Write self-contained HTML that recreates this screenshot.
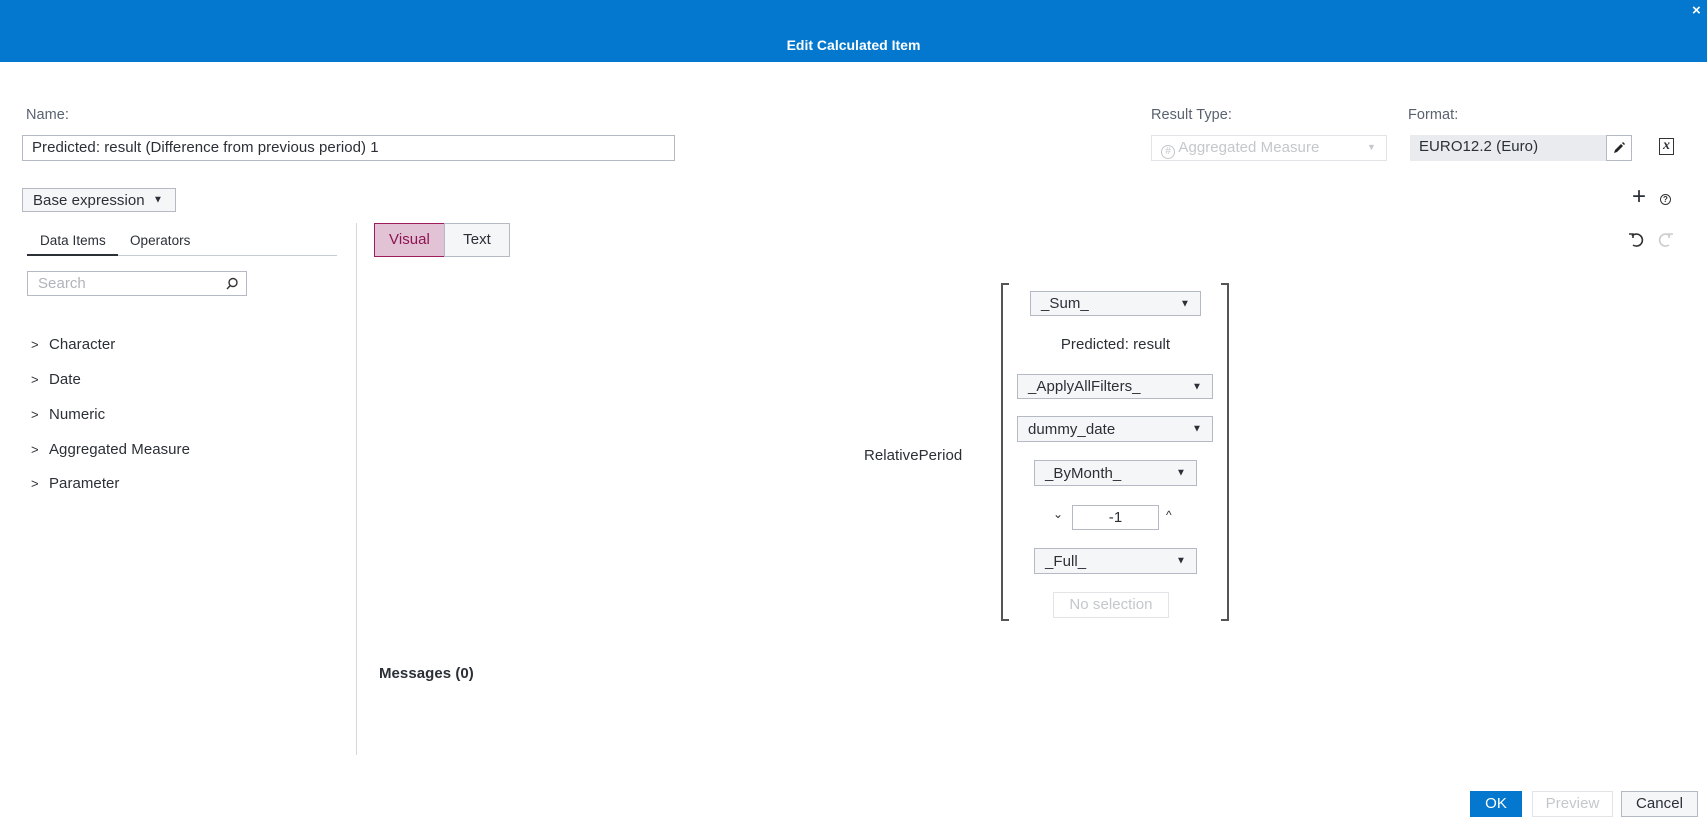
<!DOCTYPE html>
<html><head><meta charset="utf-8"><style>
*{box-sizing:border-box;margin:0;padding:0}
body{width:1707px;height:826px;background:#fff;font-family:"Liberation Sans",sans-serif;color:#2b2f36;font-size:15px;letter-spacing:0.05px;position:relative;overflow:hidden}
.a{position:absolute}
.hdr{left:0;top:0;width:1707px;height:62px;background:#0478ce}
.title{left:0;width:1707px;top:37px;text-align:center;color:#fff;font-weight:bold;font-size:14px;letter-spacing:0}
.lbl{color:#5a6270;font-size:14.5px}
.box{border:1px solid #b4b9c3;background:#fff}
.dd{border:1px solid #b4b9c3;background:#f5f6f8;font-size:15px;padding-left:10px;display:flex;align-items:center}
.dd .t{position:absolute;right:10px;font-size:10px;top:50%;transform:translateY(-50%)}
.tree{left:31px;font-size:15px}
.tree span{display:inline-block;width:18px;font-size:13px}
</style></head><body>
<div class="a hdr"></div>
<div class="a title">Edit Calculated Item</div>
<div class="a" style="left:1692px;top:2px;color:#fff;font-size:15px;font-weight:bold">×</div>

<div class="a lbl" style="left:26px;top:107px">Name:</div>
<div class="a box" style="left:22px;top:135px;width:653px;height:26px;padding:3px 9px">Predicted: result (Difference from previous period) 1</div>

<div class="a lbl" style="left:1151px;top:107px">Result Type:</div>
<div class="a" style="left:1151px;top:135px;width:236px;height:26px;border:1px solid #e2e4e8;color:#c4c7cc;padding:3px 9px">
<span style="display:inline-block;width:14px;height:14px;border:1px solid #c4c7cc;border-radius:50%;font-size:10px;text-align:center;line-height:12px;vertical-align:-2px;letter-spacing:0">#</span> Aggregated Measure<span style="position:absolute;right:10px;top:6px;font-size:9px">▼</span></div>

<div class="a lbl" style="left:1408px;top:107px">Format:</div>
<div class="a" style="left:1410px;top:135px;width:197px;height:26px;background:#e9ebef;padding:3px 9px">EURO12.2 (Euro)</div>
<div class="a box" style="left:1606px;top:135px;width:26px;height:26px"><svg width="24" height="24" viewBox="0 0 24 24"><path d="M7 17l1-3 6-6 2 2-6 6z M15 7l1-1 2 2-1 1z" fill="#222"/></svg></div>
<div class="a" style="left:1659px;top:138px;width:15px;height:17px;border:1px solid #333;font-family:'Liberation Serif',serif;font-style:italic;font-weight:bold;font-size:14px;text-align:center;line-height:14px;letter-spacing:0">x</div>

<div class="a dd" style="left:22px;top:188px;width:154px;height:24px;position:absolute">Base expression<span class="t" style="right:12px">▼</span></div>
<div class="a" style="left:1632px;top:186px;font-size:24px;line-height:22px">+</div>
<div class="a" style="left:1660px;top:194px;width:11px;height:11px;border:1px solid #333;border-radius:50%;font-size:8px;text-align:center;line-height:9px;font-weight:bold;letter-spacing:0">?</div>

<div class="a" style="left:40px;top:233px;font-size:13.5px">Data Items</div>
<div class="a" style="left:130px;top:233px;font-size:13.5px">Operators</div>
<div class="a" style="left:27px;top:255px;width:310px;height:1px;background:#c8ccd3"></div>
<div class="a" style="left:27px;top:254px;width:91px;height:2px;background:#2b2f36"></div>
<div class="a box" style="left:27px;top:271px;width:220px;height:25px;color:#b0b4bb;padding:3px 10px">Search<svg class="a" style="right:6px;top:4px" width="16" height="16" viewBox="0 0 16 16"><circle cx="9" cy="6.5" r="4" fill="none" stroke="#333" stroke-width="1.4"/><path d="M6.3 9.5L3 13" stroke="#333" stroke-width="1.4"/></svg></div>

<div class="a tree" style="top:336px"><span>&gt;</span>Character</div>
<div class="a tree" style="top:371px"><span>&gt;</span>Date</div>
<div class="a tree" style="top:406px"><span>&gt;</span>Numeric</div>
<div class="a tree" style="top:441px"><span>&gt;</span>Aggregated Measure</div>
<div class="a tree" style="top:475px"><span>&gt;</span>Parameter</div>

<div class="a" style="left:356px;top:223px;width:1px;height:532px;background:#d5d8dd"></div>

<div class="a" style="left:374px;top:223px;width:71px;height:34px;background:#e2c3d5;border:1px solid #9c1b5c;color:#8d1452;text-align:center;line-height:32px">Visual</div>
<div class="a" style="left:444px;top:223px;width:66px;height:34px;background:#f5f6f8;border:1px solid #b4b9c3;text-align:center;line-height:32px">Text</div>

<svg class="a" style="left:1626px;top:230px" width="20" height="20" viewBox="0 0 20 20"><path d="M6 6a6 6 0 1 1 1 9" fill="none" stroke="#333" stroke-width="1.6"/><path d="M3 4l4 0 0 4" fill="none" stroke="#333" stroke-width="1.6"/></svg>
<svg class="a" style="left:1656px;top:230px" width="20" height="20" viewBox="0 0 20 20"><path d="M14 6a6 6 0 1 0 -1 9" fill="none" stroke="#ccc" stroke-width="1.6"/><path d="M17 4l-4 0 0 4" fill="none" stroke="#ccc" stroke-width="1.6"/></svg>

<div class="a" style="left:864px;top:447px">RelativePeriod</div>
<div class="a" style="left:1001px;top:283px;width:8px;height:338px;border:2px solid #555;border-right:none"></div>
<div class="a" style="left:1221px;top:283px;width:8px;height:338px;border:2px solid #555;border-left:none"></div>

<div class="a dd" style="left:1030px;top:291px;width:171px;height:25px">_Sum_<span class="t">▼</span></div>
<div class="a" style="left:1030px;top:336px;width:171px;text-align:center">Predicted: result</div>
<div class="a dd" style="left:1017px;top:374px;width:196px;height:25px">_ApplyAllFilters_<span class="t">▼</span></div>
<div class="a dd" style="left:1017px;top:416px;width:196px;height:26px">dummy_date<span class="t">▼</span></div>
<div class="a dd" style="left:1034px;top:460px;width:163px;height:26px">_ByMonth_<span class="t">▼</span></div>
<div class="a" style="left:1053px;top:507px;font-size:12px">⌄</div>
<div class="a box" style="left:1072px;top:505px;width:87px;height:25px;text-align:center;line-height:23px">-1</div>
<div class="a" style="left:1166px;top:508px;font-size:12px">^</div>
<div class="a dd" style="left:1034px;top:548px;width:163px;height:26px">_Full_<span class="t">▼</span></div>
<div class="a" style="left:1053px;top:592px;width:116px;height:26px;border:1px solid #e2e4e8;color:#c4c7cc;text-align:center;line-height:24px">No selection</div>

<div class="a" style="left:379px;top:665px;font-weight:bold">Messages (0)</div>

<div class="a" style="left:1470px;top:791px;width:52px;height:26px;background:#0478ce;color:#fff;text-align:center;line-height:26px">OK</div>
<div class="a" style="left:1532px;top:791px;width:81px;height:26px;border:1px solid #e2e4e8;color:#c4c7cc;text-align:center;line-height:24px">Preview</div>
<div class="a" style="left:1621px;top:791px;width:77px;height:26px;border:1px solid #b4b9c3;background:#f5f6f8;text-align:center;line-height:24px">Cancel</div>
</body></html>
